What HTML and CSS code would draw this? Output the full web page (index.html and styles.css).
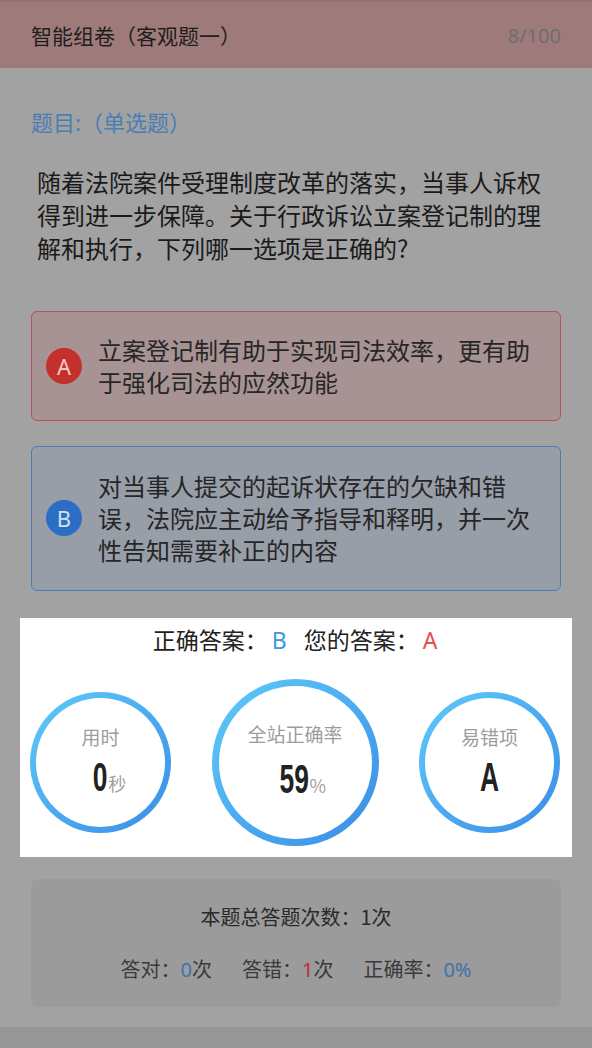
FILE: index.html
```html
<!DOCTYPE html>
<html lang="zh-CN">

<head>
    <meta charset="UTF-8">
    <meta name="viewport" content="width=device-width, initial-scale=1.0">
    <title>智能组卷</title>
    <link rel="stylesheet" href="styles.css">
</head>

<body>
    <!-- Top bar -->
    <header class="topbar">
        <h1 class="topbar-title">智能组卷（客观题一）</h1>
        <span class="topbar-count">8/100</span>
    </header>

    <main class="question">
        <p class="question-type">题目:（单选题）</p>
        <p class="question-text">随着法院案件受理制度改革的落实，当事人诉权得到进一步保障。关于行政诉讼立案登记制的理解和执行，下列哪一选项是正确的?</p>

        <div class="options">
            <div class="option option-wrong">
                <span class="option-mark">A</span>
                <span class="option-text">立案登记制有助于实现司法效率，更有助于强化司法的应然功能</span>
            </div>
            <div class="option option-right">
                <span class="option-mark">B</span>
                <span class="option-text">对当事人提交的起诉状存在的欠缺和错误，法院应主动给予指导和释明，并一次性告知需要补正的内容</span>
            </div>
        </div>
    </main>

    <!-- Result panel (highlighted) -->
    <section class="result">
        <p class="result-answer">正确答案：<span class="ans-right">B</span>您的答案：<span class="ans-wrong">A</span></p>
        <div class="rings">
            <div class="ring">
                <div class="ring-inner">
                    <span class="ring-label">用时</span>
                    <span class="ring-value has-unit"><b class="big">0</b><small>秒</small></span>
                </div>
            </div>
            <div class="ring ring-large">
                <div class="ring-inner">
                    <span class="ring-label">全站正确率</span>
                    <span class="ring-value has-unit unit-pct"><b class="big big-two">59</b><small>%</small></span>
                </div>
            </div>
            <div class="ring">
                <div class="ring-inner">
                    <span class="ring-label">易错项</span>
                    <span class="ring-value"><b class="big">A</b></span>
                </div>
            </div>
        </div>
    </section>

    <!-- Answer stats -->
    <section class="stats">
        <p class="stats-total">本题总答题次数：1次</p>
        <p class="stats-line">
            <span>答对：<em class="num-blue">0</em>次</span>
            <span>答错：<em class="num-red">1</em>次</span>
            <span>正确率：<em class="num-blue">0%</em></span>
        </p>
    </section>

    <footer class="bottombar"></footer>
</body>

</html>
```

FILE: styles.css
```css
/* Page (dimmed under the result popup) */
body {
    margin: 0;
    padding: 0;
    width: 592px;
    height: 1048px;
    overflow: hidden;
    background-color: #a2a2a2;
    font-family: 'Noto Sans CJK SC', 'Noto Sans', sans-serif;
    color: #1c1c1c;
}

p {
    margin: 0;
}

/* Top bar */
.topbar {
    height: 66px;
    border-top: 2px solid #937071;
    background-color: #9f7a7b;
    display: flex;
    justify-content: space-between;
    align-items: center;
    padding: 0 31px 0 31px;
}
.topbar-title {
    margin: 0;
    font-size: 21px;
    font-weight: normal;
    color: #1e1e1e;
}
.topbar-count {
    font-size: 20px;
    color: #6e6e6e;
    font-family: 'Noto Sans', 'Noto Sans CJK SC', sans-serif;
}

/* Question */
.question {
    padding: 0 31px;
}
.question-type {
    margin-top: 38px;
    font-size: 22px;
    line-height: 30px;
    color: #4a7eb3;
}
.question-text {
    margin-top: 29px;
    padding: 0 6px 0 6px;
    font-size: 24px;
    line-height: 33px;
    color: #1a1a1a;
}

/* Options */
.options {
    margin-top: 47px;
    display: flex;
    flex-direction: column;
    gap: 25px;
}
.option {
    display: flex;
    align-items: center;
    gap: 16px;
    padding: 22px 16px 22px 14px;
    border: 1.5px solid;
    border-radius: 6px;
}
.option-wrong {
    border-color: #b8525a;
    background-color: #a89394;
}
.option-right {
    border-color: #4a7db6;
    background-color: #989ea8;
    padding-top: 23px;
    padding-bottom: 24px;
}
.option-mark {
    flex: 0 0 36px;
    height: 36px;
    border-radius: 50%;
    display: flex;
    justify-content: center;
    align-items: center;
    font-family: 'Noto Sans', sans-serif;
    font-size: 22px;
}
.option-wrong .option-mark {
    background-color: #c4302c;
    color: #f2caca;
}
.option-right .option-mark {
    background-color: #2c6ec4;
    color: #cfe0f2;
}
.option-text {
    font-size: 24px;
    line-height: 32px;
    color: #262626;
}

/* Result popup */
.result {
    margin: 27px 20px 0 20px;
    background-color: #fff;
    padding: 7px 12px 11px 10px;
}
.result-answer {
    text-align: center;
    font-size: 23px;
    line-height: 28px;
    color: #222;
}
.ans-right,
.ans-wrong {
    font-family: 'Noto Sans', sans-serif;
    margin-left: 4px;
}
.ans-right {
    color: #3a9ae0;
    margin-right: 17px;
}
.ans-wrong {
    color: #e05050;
}
.rings {
    margin-top: 25px;
    display: flex;
    justify-content: space-between;
    align-items: center;
}
.ring {
    width: 141px;
    height: 141px;
    padding: 6px;
    box-sizing: border-box;
    border-radius: 50%;
    background: linear-gradient(135deg, #5fcbf9 0%, #4aa8f0 55%, #3a8de6 100%);
}
.ring-large {
    width: 167px;
    height: 167px;
    padding: 7px;
}
.ring-inner {
    width: 100%;
    height: 100%;
    border-radius: 50%;
    background-color: #fff;
    display: flex;
    flex-direction: column;
    justify-content: center;
    align-items: center;
    gap: 6px;
    padding-bottom: 2px;
    box-sizing: border-box;
}
.ring-large .ring-inner {
    gap: 11px;
}
.ring-label {
    font-size: 19px;
    line-height: 24px;
    color: #9c9c9c;
}
.ring-value {
    display: flex;
    align-items: baseline;
    height: 44px;
    line-height: 44px;
}
/* keep the big number centred, the unit hangs to its right */
.has-unit {
    padding-left: 18px;
}
.unit-pct {
    padding-left: 16px;
}
.ring-value .big {
    display: inline-block;
    font-family: 'Liberation Sans', sans-serif;
    font-weight: bold;
    font-size: 40px;
    color: #222;
    transform: scaleX(0.66);
    margin: 0 -4px;
}
.ring-value .big-two {
    margin: 0 -8px;
}
.ring-value small {
    font-size: 18px;
    color: #a0a0a0;
    margin-left: 1px;
}

/* Stats card */
.stats {
    margin: 22px 31px 0 31px;
    height: 128px;
    border-radius: 8px;
    background-color: #9b9b9b;
    display: flex;
    flex-direction: column;
    align-items: center;
    padding-top: 24px;
    box-sizing: border-box;
    color: #2a2a2a;
}
.stats-total {
    font-size: 20px;
    line-height: 28px;
}
.stats-line {
    margin-top: 24px;
    font-size: 20px;
    line-height: 28px;
    color: #3a3a3a;
    display: flex;
    gap: 30px;
}
.stats-line em {
    font-style: normal;
    font-family: 'Noto Sans', sans-serif;
}
.num-blue {
    color: #3b74ae;
}
.num-red {
    color: #b83232;
}

.bottombar {
    margin-top: 20px;
    height: 30px;
    background-color: #969696;
}
```
